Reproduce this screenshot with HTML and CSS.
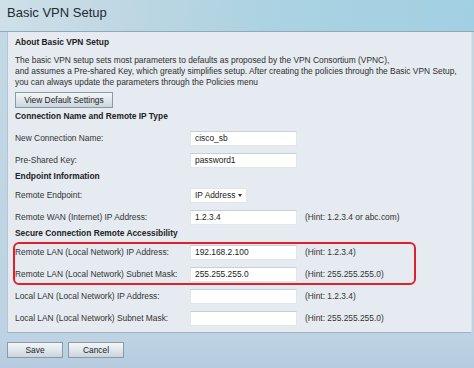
FILE: index.html
```html
<!DOCTYPE html>
<html lang="en">
<head>
    <meta charset="UTF-8">
    <title>Basic VPN Setup</title>
    <link rel="stylesheet" href="styles.css">
</head>
<body>
    <div class="page-header">
        <h1>Basic VPN Setup</h1>
    </div>

    <div class="panel">
        <h2 class="section-title">About Basic VPN Setup</h2>
        <p class="intro">
            The basic VPN setup sets most parameters to defaults as proposed by the VPN Consortium (VPNC),<br>
            and assumes a Pre-shared Key, which greatly simplifies setup. After creating the policies through the Basic VPN Setup,<br>
            you can always update the parameters through the Policies menu
        </p>
        <button class="btn btn-wide" type="button">View Default Settings</button>

        <h2 class="section-title section-first">Connection Name and Remote IP Type</h2>
        <div class="form-row">
            <label>New Connection Name:</label>
            <input class="text-field" type="text" value="cisco_sb">
        </div>
        <div class="form-row">
            <label>Pre-Shared Key:</label>
            <input class="text-field" type="text" value="password1">
        </div>

        <h2 class="section-title">Endpoint Information</h2>
        <div class="form-row">
            <label>Remote Endpoint:</label>
            <div class="select-field">IP Address <span class="caret"></span></div>
        </div>
        <div class="form-row">
            <label>Remote WAN (Internet) IP Address:</label>
            <input class="text-field" type="text" value="1.2.3.4">
            <span class="hint">(Hint: 1.2.3.4 or abc.com)</span>
        </div>

        <h2 class="section-title">Secure Connection Remote Accessibility</h2>
        <div class="highlight">
            <div class="form-row">
                <label>Remote LAN (Local Network) IP Address:</label>
                <input class="text-field" type="text" value="192.168.2.100">
                <span class="hint">(Hint: 1.2.3.4)</span>
            </div>
            <div class="form-row">
                <label>Remote LAN (Local Network) Subnet Mask:</label>
                <input class="text-field" type="text" value="255.255.255.0">
                <span class="hint">(Hint: 255.255.255.0)</span>
            </div>
        </div>
        <div class="form-row">
            <label>Local LAN (Local Network) IP Address:</label>
            <input class="text-field" type="text" value="">
            <span class="hint">(Hint: 1.2.3.4)</span>
        </div>
        <div class="form-row">
            <label>Local LAN (Local Network) Subnet Mask:</label>
            <input class="text-field" type="text" value="">
            <span class="hint">(Hint: 255.255.255.0)</span>
        </div>
    </div>

    <div class="actions">
        <button class="btn" type="button">Save</button>
        <button class="btn" type="button">Cancel</button>
    </div>
</body>
</html>
```

FILE: styles.css
```css
* {
    margin: 0;
    padding: 0;
    box-sizing: border-box;
}

body {
    font-family: 'Liberation Sans', Arial, sans-serif;
    font-size: 8.4px;
    color: #2b2b2b;
    background: linear-gradient(to bottom, #c4d9e5 0px, #bdd2e2 340px, #b6cbdf 368px);
    height: 368px;
    overflow: hidden;
}

.page-header {
    height: 32px;
    padding: 4px 0 0 7px;
    background: linear-gradient(100deg, #cfe0e8 0%, #bcd6e2 30%, #aad2e2 60%, #a2d0e3 100%);
    border-bottom: 1px solid #8fa9b6;
}

.page-header h1 {
    font-size: 13px;
    font-weight: normal;
    color: #1f2a33;
    line-height: 18px;
}

.panel {
    margin: 0 2px 0 7px;
    padding: 4px 8px 3px 7px;
    background-color: #e5ebf0;
    border-left: 1px solid #b3c6d3;
    border-right: 1px solid #d5e0e8;
    border-bottom: 1px solid #9fb4c4;
}

.section-title {
    font-size: 8.4px;
    font-weight: bold;
    line-height: 11px;
    margin-bottom: 2px;
    color: #222;
}

.section-first {
    margin-bottom: 5px;
}

.panel > .section-title:first-child {
    line-height: 12px;
    margin-bottom: 0;
}

.intro {
    margin-top: 7px;
    line-height: 11px;
    color: #2f2f2f;
}

.btn {
    font-family: 'Liberation Sans', Arial, sans-serif;
    font-size: 8.4px;
    color: #222;
    height: 16px;
    width: 56px;
    border: 1px solid #8e9aa3;
    background: linear-gradient(to bottom, #f2f6f8 0%, #dfe7ec 50%, #c9d5dd 100%);
}

.btn-wide {
    width: 98px;
    margin-top: 4px;
    margin-bottom: 3px;
}

.form-row {
    display: grid;
    grid-template-columns: 167px 107px auto;
    column-gap: 8px;
    align-items: center;
    height: 22px;
}

.form-row label {
    color: #333;
}

.text-field {
    height: 15px;
    width: 107px;
    padding: 0 4px;
    font-family: 'Liberation Sans', Arial, sans-serif;
    font-size: 8.4px;
    color: #222;
    background: #fff;
    border: 1px solid #e2e6e9;
    border-top-color: #c9d0d5;
}

.select-field {
    display: flex;
    align-items: center;
    justify-content: space-between;
    width: 57px;
    height: 15px;
    padding: 0 4px;
    background: #fff;
    border: 1px solid #e2e6e9;
    color: #222;
}

.caret {
    width: 0;
    height: 0;
    border-left: 2.5px solid transparent;
    border-right: 2.5px solid transparent;
    border-top: 3px solid #333;
}

.hint {
    color: #333;
}

.highlight {
    position: relative;
}

.highlight::after {
    content: "";
    position: absolute;
    top: 1px;
    bottom: 0;
    left: -2px;
    width: 399px;
    border: 2px solid #e0212b;
    border-radius: 6px;
    pointer-events: none;
}

.actions {
    display: flex;
    gap: 5px;
    padding: 9px 0 0 7px;
}
```
